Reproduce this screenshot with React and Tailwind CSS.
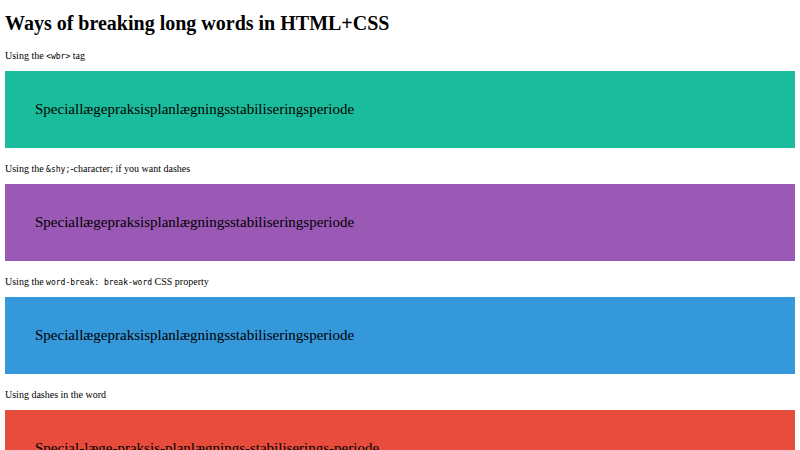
import React from 'react';

const serif = { fontFamily: '"Liberation Serif", "Times New Roman", serif' };

function Code({ children }) {
  return <code className="font-['DejaVu_Sans_Mono',monospace] text-[8px] leading-[12px]">{children}</code>;
}

const sections = [
  { label: <>Using the <Code>&lt;wbr&gt;</Code> tag</>, bg: 'bg-[#1abc9c]', text: 'Speciallægepraksisplanlægningsstabiliseringsperiode' },
  { label: <>Using the <Code>&amp;shy;</Code>-character; if you want dashes</>, bg: 'bg-[#9b59b6]', text: 'Speciallægepraksisplanlægningsstabiliseringsperiode' },
  { label: <>Using the <Code>word-break: break-word</Code> CSS property</>, bg: 'bg-[#3498db]', text: 'Speciallægepraksisplanlægningsstabiliseringsperiode' },
  { label: <>Using dashes in the word</>, bg: 'bg-[#e74c3c]', text: 'Special-læge-praksis-planlægnings-stabiliserings-periode' },
];

export default function App() {
  return (
    <div style={serif} className="px-[5px] text-black bg-white h-screen overflow-hidden">
      <h1 className="pt-[11px] text-[20px] leading-[24px] font-bold">Ways of breaking long words in HTML+CSS</h1>
      {sections.map((s, i) => (
        <div key={i}>
          <p className="mt-[15px] mb-[9px] h-[12px] text-[10px] leading-[12px]">{s.label}</p>
          <div className={`${s.bg} px-[30px] py-[30px] text-[15px] leading-[17px]`}>{s.text}</div>
        </div>
      ))}
    </div>
  );
}
